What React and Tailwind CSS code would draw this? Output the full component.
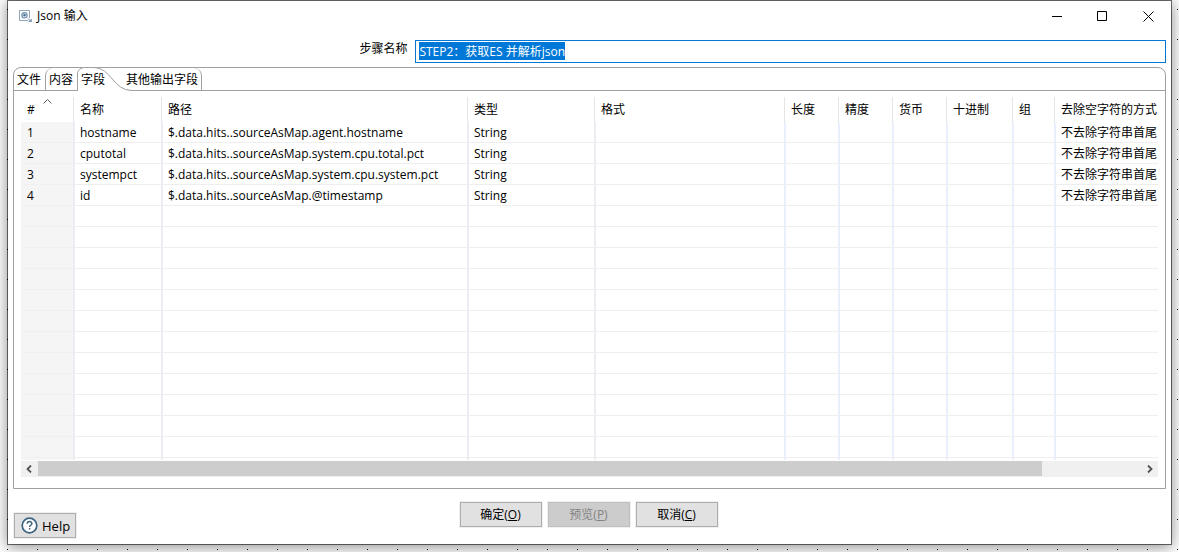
import { useEffect, useRef, useState } from 'react';

const columns = [
  { name: '名称', width: 'w-[88px]' },
  { name: '路径', width: 'w-[306px]' },
  { name: '类型', width: 'w-[127px]' },
  { name: '格式', width: 'w-[190px]' },
  { name: '长度', width: 'w-[54px]' },
  { name: '精度', width: 'w-[54px]' },
  { name: '货币', width: 'w-[54px]' },
  { name: '十进制', width: 'w-[66px]' },
  { name: '组', width: 'w-[42px]' },
  { name: '去除空字符的方式', width: '' },
];

const trim = '不去除字符串首尾';

const fields = [
  ['hostname', '$.data.hits..sourceAsMap.agent.hostname', 'String', '', '', '', '', '', '', trim],
  ['cputotal', '$.data.hits..sourceAsMap.system.cpu.total.pct', 'String', '', '', '', '', '', '', trim],
  ['systempct', '$.data.hits..sourceAsMap.system.cpu.system.pct', 'String', '', '', '', '', '', '', trim],
  ['id', '$.data.hits..sourceAsMap.@timestamp', 'String', '', '', '', '', '', '', trim],
];

const ROW_COUNT = 16;

function TitleBar() {
  return (
    <header className="flex h-[30px] items-center pl-[11px]">
      <svg className="h-3 w-[13px]" viewBox="0 0 13 12" fill="none">
        <path d="M9 10.5H.5V.5h10V8" stroke="#8fa5b8" />
        <circle cx="5.5" cy="5.3" r="2.6" stroke="#7c98b0" strokeWidth="1.4" />
        <circle cx="5.5" cy="5.3" r="1.2" fill="#3d6a92" />
        <path d="M9 8.5l3 3M12.2 9v2.7H9.5" stroke="#5c7f9c" />
      </svg>
      <h1 className="ml-[5px] flex-1">Json 输入</h1>
      <button type="button" aria-label="Minimize" className="flex h-full w-11 items-center justify-center">
        <svg className="h-[11px] w-[11px]" viewBox="0 0 11 11">
          <path d="M0 5.5h10" stroke="#000" />
        </svg>
      </button>
      <button type="button" aria-label="Maximize" className="flex h-full w-[46px] items-center justify-center">
        <svg className="h-[11px] w-[11px]" viewBox="0 0 11 11">
          <path d="M.5 .5h9v9h-9z" fill="none" stroke="#000" />
        </svg>
      </button>
      <button type="button" aria-label="Close" className="flex h-full w-[46px] items-center justify-center">
        <svg className="h-[11px] w-[11px]" viewBox="0 0 11 11">
          <path d="M.5 .5l10 10M10.5 .5l-10 10" stroke="#000" />
        </svg>
      </button>
    </header>
  );
}

function Tabs() {
  return (
    <div role="tablist" className="flex h-[23px] leading-6">
      <button type="button" role="tab" aria-selected="false" className="border-b border-[#a0a0a0] pl-[3px] pr-1">
        文件
      </button>
      <button type="button" role="tab" aria-selected="false" className="rounded-tl-lg border-b border-l border-[#a0a0a0] pl-[3px] pr-1">
        内容
      </button>
      <button type="button" role="tab" aria-selected="true" className="relative z-10 w-[45px] pl-1 text-left">
        {/* slanted right edge of the selected tab */}
        <svg className="absolute -top-px left-0 h-6 w-14" viewBox="0 0 56 24">
          <path d="M.5 24V7C.5 3 4 .5 8 .5H17C34 .5 36 23.5 55 23.5V24z" fill="#fff" />
          <path d="M.5 24V7C.5 3 4 .5 8 .5H17C34 .5 36 23.5 55 23.5" fill="none" stroke="#a0a0a0" />
        </svg>
        <span className="relative">字段</span>
      </button>
      <button type="button" role="tab" aria-selected="false" className="rounded-tr-lg border-b border-r border-[#a0a0a0] pl-1 pr-[3px]">
        其他输出字段
      </button>
      <div className="flex-1 border-b border-[#a0a0a0]"></div>
    </div>
  );
}

function FieldsTable() {
  const rows = Array.from({ length: ROW_COUNT }, (_, i) => fields[i] || []);

  return (
    <table className="w-full table-fixed border-separate border-spacing-0 text-left">
      <thead>
        <tr>
          <th className="relative h-[25px] w-[52px] pl-[6px] font-normal">
            #
            <svg className="absolute left-[22px] top-[2px] h-[5px] w-[9px]" viewBox="0 0 9 5">
              <path d="M.5 4.5l4-4 4 4" fill="none" stroke="#606060" />
            </svg>
          </th>
          {columns.map((column) => (
            <th key={column.name} className={`h-[25px] whitespace-nowrap border-l border-[#e5e5e5] p-0 pl-[6px] font-normal ${column.width}`}>
              {column.name}
            </th>
          ))}
        </tr>
      </thead>
      <tbody>
        {rows.map((row, index) => (
          <tr key={index}>
            <td className="h-[21px] border-b border-[#f0f0f0] bg-[#f5f5f5] p-0 pl-[6px] pt-[2px]">
              {row.length ? index + 1 : ''}
            </td>
            {columns.map((column, i) => (
              <td
                key={column.name}
                className={`h-[21px] whitespace-nowrap border-b border-l-2 border-b-[#eeeeee] p-0 pl-[5px] pt-[2px] ${i < 4 ? 'border-l-[#ebedf2]' : 'border-l-[#e9f0fb]'}`}
              >
                {row[i]}
              </td>
            ))}
          </tr>
        ))}
        <tr aria-hidden="true">
          <td className="h-[2px] bg-[#f5f5f5] p-0"></td>
          {columns.map((column, i) => (
            <td key={column.name} className={`h-[2px] border-l-2 p-0 ${i < 4 ? 'border-l-[#ebedf2]' : 'border-l-[#e9f0fb]'}`}></td>
          ))}
        </tr>
      </tbody>
    </table>
  );
}

function ScrollBar() {
  return (
    <div className="mt-px flex h-4 bg-[#f0f0f0]">
      <button type="button" aria-label="Scroll left" className="flex w-[17px] items-center justify-center">
        <svg className="h-2 w-[7px]" viewBox="0 0 7 8">
          <path d="M5 .5L1.500 4 5 7.500" fill="none" stroke="#505050" strokeWidth="1.8" />
        </svg>
      </button>
      <div className="flex-1">
        <div className="h-[15px] w-[91%] bg-[#cdcdcd]"></div>
      </div>
      <button type="button" aria-label="Scroll right" className="flex w-[17px] items-center justify-center">
        <svg className="h-2 w-[7px]" viewBox="0 0 7 8">
          <path d="M2 .5L5.500 4 2 7.500" fill="none" stroke="#505050" strokeWidth="1.8" />
        </svg>
      </button>
    </div>
  );
}

export default function App() {
  const [stepName, setStepName] = useState('STEP2：获取ES 并解析json');
  const nameRef = useRef(null);

  useEffect(() => {
    nameRef.current.focus();
    nameRef.current.select();
  }, []);

  const button = 'h-[25px] w-[82px] border border-[#adadad] bg-[#e1e1e1] shadow-[0_0_0_1px_#f0f0f0]';

  return (
    <div className="flex min-h-screen bg-white bg-[conic-gradient(from_270deg_at_1px_1px,#000_90deg,transparent_0deg)] bg-[length:30px_30px] bg-[position:7px_9px] px-[7px] pb-[7px] font-['Open_Sans','Noto_Sans_CJK_SC',sans-serif] text-[12px] leading-4 text-black">
      <div className="flex min-w-0 flex-1 flex-col border border-black/55 bg-white bg-clip-padding shadow-[0_2px_14px_rgba(0,0,0,0.45)]">
        <TitleBar />
        <main className="flex flex-1 flex-col px-[5px] pb-[6px]">
          <div className="mt-[9px] flex">
            <label htmlFor="step-name" className="w-[34.9%] pr-2 pt-px text-right">步骤名称</label>
            <input
              id="step-name"
              ref={nameRef}
              className="h-[23px] min-w-0 flex-1 border border-[#0078d7] px-[3px] pb-[2px] outline-none selection:bg-[#0078d7] selection:text-white"
              value={stepName}
              onChange={(e) => setStepName(e.target.value)}
            />
          </div>
          <section className="mt-1 flex-1 rounded-t-lg border border-[#a0a0a0]">
            <Tabs />
            <div className="px-[7px] pt-[6px]">
              <FieldsTable />
              <ScrollBar />
            </div>
          </section>
          <footer className="mt-[13px] grid h-9 grid-cols-[1fr_auto_1fr] pr-[2px]">
            <div className="flex items-end pl-px">
              <button type="button" className="flex h-[25px] items-center gap-1 border border-[#adadad] bg-[#e1e1e1] px-[5px] pl-[6px] text-[13px] shadow-[0_0_0_1px_#f0f0f0]">
                <svg className="h-[17px] w-[17px]" viewBox="0 0 17 17" fill="none" stroke="#3d6480">
                  <circle cx="8.5" cy="8.500" r="7.300" fill="#fff" strokeWidth="1.700" />
                  <path d="M6.200 6.800c0-3 4.700-2.900 4.700-.2 0 1.700-2.300 1.600-2.300 3.300M8.600 11v1.500" strokeWidth="1.500" />
                </svg>
                Help
              </button>
            </div>
            <div className="flex gap-[6px]">
              <button type="button" className={button}>确定(<u>O</u>)</button>
              <button type="button" disabled className="h-[25px] w-[82px] border border-[#bfbfbf] bg-[#cccccc] text-[#838383] shadow-[0_0_0_1px_#f0f0f0]">预览(<u>P</u>)</button>
              <button type="button" className={button}>取消(<u>C</u>)</button>
            </div>
          </footer>
        </main>
      </div>
    </div>
  );
}
